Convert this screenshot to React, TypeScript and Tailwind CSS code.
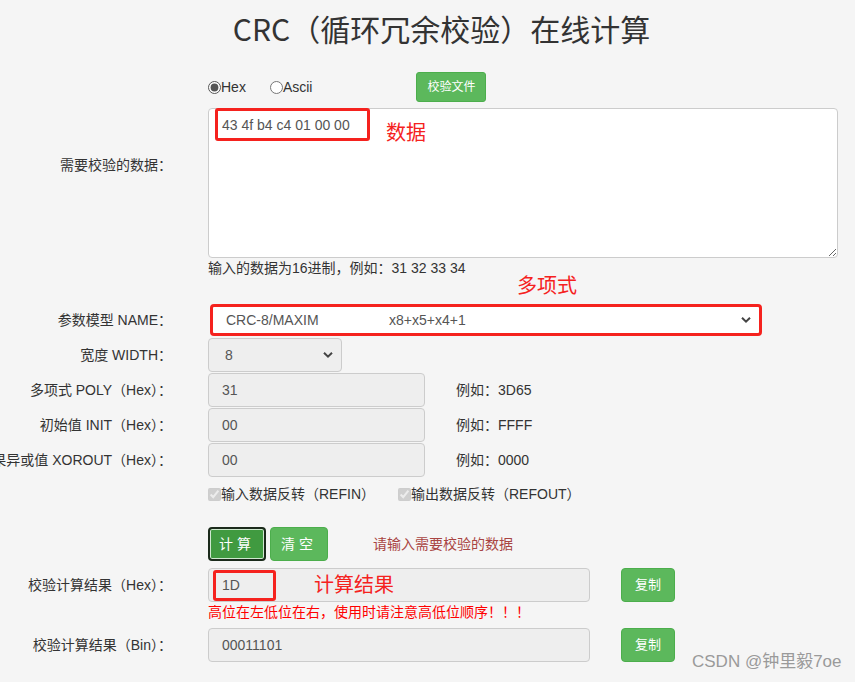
import React from 'react';

const FONT = { fontFamily: '"Liberation Sans", "Noto Sans CJK SC", sans-serif' };

// Label column: text right edge sits at x=172, fields start at x=208.
const Label: React.FC<{ children: React.ReactNode; className?: string }> = ({ children, className = '' }) => (
  <div className={`w-[208px] shrink-0 pr-[36px] flex justify-end whitespace-nowrap text-[14px] text-[#333] ${className}`}>
    <span>{children}</span>
  </div>
);

const Chevron: React.FC = () => (
  <svg width="10" height="7" viewBox="0 0 10 7" className="absolute right-[8px] top-1/2 -translate-y-1/2 pointer-events-none">
    <path d="M1 1.2 L5 5.2 L9 1.2" fill="none" stroke="#444" strokeWidth="2" />
  </svg>
);

const GrayInput: React.FC<{ value: string; w: string }> = ({ value, w }) => (
  <div className={`${w} h-[34px] bg-[#eeeeee] border border-[#cccccc] rounded-[4px] flex items-center pl-[13px] text-[14px] text-[#555]`}>
    {value}
  </div>
);

const CopyBtn: React.FC = () => (
  <button className="ml-[31px] w-[54px] h-[34px] bg-[#5cb85c] border border-[#4cae4c] rounded-[4px] text-white text-[13px]">
    复制
  </button>
);

const FieldRow: React.FC<{ label: string; value: string; hint: string }> = ({ label, value, hint }) => (
  <div className="flex items-center mt-px">
    <Label>{label}</Label>
    <GrayInput value={value} w="w-[217px]" />
    <span className="ml-[31px] text-[14px] text-[#333]">{hint}</span>
  </div>
);

export default function App() {
  return (
    <div className="w-[855px] h-[682px] bg-[#f5f5f5] overflow-hidden relative" style={FONT}>
      <h1 className="pt-[8px] pl-[28px] text-center text-[30px] leading-[40px] text-[#333]" style={{ fontFamily: '"Noto Sans CJK SC", "Liberation Sans", sans-serif' }}>
        CRC（循环冗余校验）在线计算
      </h1>

      {/* radio row */}
      <div className="flex items-center mt-[24px] h-[30px]">
        <div className="w-[208px] shrink-0" />
        <label className="flex items-center text-[14px] text-[#333]">
          <input type="radio" name="fmt" defaultChecked className="m-0 w-[13px] h-[13px] accent-[#555]" />
          <span>Hex</span>
        </label>
        <label className="flex items-center text-[14px] text-[#333] ml-[24px]">
          <input type="radio" name="fmt" className="m-0 w-[13px] h-[13px]" />
          <span>Ascii</span>
        </label>
        <button className="ml-[104px] w-[70px] h-[30px] bg-[#5cb85c] border border-[#4cae4c] rounded-[3px] text-white text-[12px]">
          校验文件
        </button>
      </div>

      {/* data textarea */}
      <div className="flex items-start mt-[6px]">
        <Label className="pt-[47px] leading-[20px]">需要校验的数据：</Label>
        <div className="relative">
          <textarea
            defaultValue="43 4f b4 c4 01 00 00"
            className="block w-[630px] h-[150px] bg-white border border-[#cccccc] rounded-[4px] pl-[13px] pr-[8px] pt-[6px] text-[14px] leading-[20px] text-[#555] resize-y outline-none"
          />
          <div className="absolute left-[7px] top-0 w-[155px] h-[33px] border-[3px] border-[#f5221e] rounded-[3px] pointer-events-none" />
          <span className="absolute left-[178px] top-[11px] text-[20px] leading-[26px] text-[#f5221e]" style={{ fontFamily: '"Noto Sans CJK SC", sans-serif' }}>
            数据
          </span>
        </div>
      </div>

      {/* hint */}
      <div className="flex relative">
        <div className="w-[208px] shrink-0" />
        <span className="text-[14px] leading-[20px] text-[#333]">输入的数据为16进制，例如：31 32 33 34</span>
        <span className="absolute left-[517px] top-[14px] text-[20px] leading-[26px] text-[#f5221e]" style={{ fontFamily: '"Noto Sans CJK SC", sans-serif' }}>
          多项式
        </span>
      </div>

      {/* model NAME */}
      <div className="flex items-center mt-[26px]">
        <Label>参数模型 NAME：</Label>
        <div className="relative w-[552px] h-[32px] bg-white rounded-[4px] border-[3px] border-[#f5221e] ml-[2px]">
          <div className="flex items-center h-full pl-[13px] text-[14px] text-[#555]">
            <span className="w-[163px]">CRC-8/MAXIM</span>
            <span>x8+x5+x4+1</span>
          </div>
          <Chevron />
        </div>
      </div>

      {/* WIDTH */}
      <div className="flex items-center mt-[2px]">
        <Label>宽度 WIDTH：</Label>
        <div className="relative w-[134px] h-[34px] bg-[#eeeeee] border border-[#cccccc] rounded-[4px] flex items-center pl-[16px] text-[14px] text-[#555]">
          8
          <Chevron />
        </div>
      </div>

      <FieldRow label="多项式 POLY（Hex）：" value="31" hint="例如：3D65" />
      <FieldRow label="初始值 INIT（Hex）：" value="00" hint="例如：FFFF" />
      <FieldRow label="结果异或值 XOROUT（Hex）：" value="00" hint="例如：0000" />

      {/* reflect checkboxes */}
      <div className="flex items-center mt-[7px] h-[20px] text-[14px] text-[#333]">
        <div className="w-[208px] shrink-0" />
        <label className="flex items-center w-[190px]">
          <input type="checkbox" checked disabled readOnly className="m-0 w-[13px] h-[13px]" />
          <span>输入数据反转（REFIN）</span>
        </label>
        <label className="flex items-center">
          <input type="checkbox" checked disabled readOnly className="m-0 w-[13px] h-[13px]" />
          <span>输出数据反转（REFOUT）</span>
        </label>
      </div>

      {/* action buttons */}
      <div className="flex items-center mt-[23px]">
        <div className="w-[208px] shrink-0" />
        <button className="w-[58px] h-[34px] bg-[#409a40] border-2 border-[#1b2a1b] rounded-[4px] text-white text-[14px] tracking-[4px] shadow-[inset_0_0_0_1px_#cfe8cf]">
          计算
        </button>
        <button className="ml-[4px] w-[58px] h-[34px] bg-[#5cb85c] border border-[#4cae4c] rounded-[4px] text-white text-[14px] tracking-[4px]">
          清空
        </button>
        <span className="ml-[45px] text-[14px] text-[#a94442]">请输入需要校验的数据</span>
      </div>

      {/* hex result */}
      <div className="flex items-center mt-[7px]">
        <Label>校验计算结果（Hex）：</Label>
        <div className="relative">
          <GrayInput value="1D" w="w-[382px]" />
          <div className="absolute left-[5px] top-[2px] w-[63px] h-[31px] border-[3px] border-[#f5221e] rounded-[3px] pointer-events-none" />
          <span className="absolute left-[106px] top-[3px] text-[20px] leading-[26px] text-[#f5221e]" style={{ fontFamily: '"Noto Sans CJK SC", sans-serif' }}>
            计算结果
          </span>
        </div>
        <CopyBtn />
      </div>

      <div className="flex">
        <div className="w-[208px] shrink-0" />
        <span className="text-[14px] leading-[20px] text-[#ff0000]">高位在左低位在右，使用时请注意高低位顺序！！！</span>
      </div>

      {/* bin result */}
      <div className="flex items-center mt-[6px]">
        <Label>校验计算结果（Bin）：</Label>
        <GrayInput value="00011101" w="w-[382px]" />
        <CopyBtn />
      </div>

      <span className="absolute left-[692px] top-[651px] text-[17px] leading-[22px] text-[#9a9a9a]">CSDN @钟里毅7oe</span>
    </div>
  );
}
